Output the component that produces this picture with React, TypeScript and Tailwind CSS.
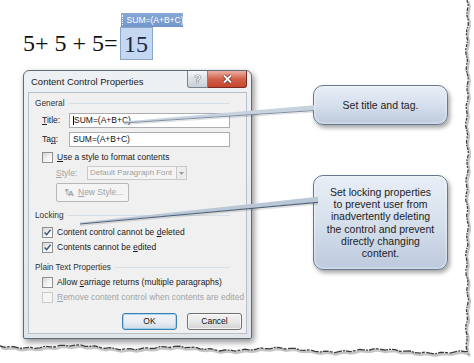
import React from 'react';

// small helpers for the Win7 style dialog
const sans = "font-['Liberation_Sans',Arial,sans-serif]";

function Check({ checked, disabled }: { checked?: boolean; disabled?: boolean }) {
  return (
    <span
      className={`relative w-[11px] h-[11px] shrink-0 border ${
        disabled
          ? 'border-[#cacaca] bg-[#f5f5f5]'
          : 'border-[#8e8f8f] bg-gradient-to-br from-[#d6d6d6] via-[#f0f0f0] to-white'
      }`}
    >
      {checked && (
        <svg className="absolute left-0 top-0" width="9" height="9" viewBox="0 0 9 9">
          <path d="M1.6 4.4 L3.7 6.7 L7.6 1.6" fill="none" stroke="#3e5474" strokeWidth="1.5" />
        </svg>
      )}
    </span>
  );
}

function CheckRow({
  children,
  checked,
  disabled,
  className,
}: {
  children: React.ReactNode;
  checked?: boolean;
  disabled?: boolean;
  className: string;
}) {
  return (
    <div className={`flex items-center gap-[4px] pl-[7px] h-[11px] ${className}`}>
      <Check checked={checked} disabled={disabled} />
      <span className={`text-[8.5px] leading-none whitespace-nowrap ${disabled ? 'text-[#a3a3a3]' : 'text-[#1b1b1b]'}`}>
        {children}
      </span>
    </div>
  );
}

function GroupHead({ children, className }: { children: React.ReactNode; className: string }) {
  return (
    <div className={`flex items-center h-[12px] gap-[4px] ${className}`}>
      <span className="text-[8.3px] leading-none text-[#303030] whitespace-nowrap">{children}</span>
      <span className="flex-1 h-px bg-[#d5dfe5]" />
    </div>
  );
}

function Callout({ children, className }: { children: React.ReactNode; className: string }) {
  return (
    <div
      className={`w-[135px] flex items-center justify-center rounded-[10px] border-[1.5px] border-[#65788f] bg-gradient-to-b from-[#e8eef6] via-[#d6e0ed] to-[#bccadd] shadow-[inset_0_0_3px_rgba(255,255,255,0.95),2px_3px_4px_rgba(0,0,0,0.35)] text-center text-[10.5px] leading-[12.3px] text-[#222] ${sans} ${className}`}
    >
      {children}
    </div>
  );
}

const rightEdge = Array.from({ length: 72 }, (_, i) => {
  const y = i * 5;
  const x = 467 + Math.sin(i * 1.7) * 0.9 + Math.sin(i * 0.45) * 0.7;
  return `${x.toFixed(1)},${y}`;
}).join(' ');

const bottomEdge = Array.from({ length: 95 }, (_, i) => {
  const x = Math.min(i * 5, 468);
  const y = 346 + (x / 467) * 6 + Math.sin(i * 0.31) * 1.6 + Math.sin(i * 1.9) * 0.8;
  return `${x},${y.toFixed(1)}`;
}).join(' ');

export default function App() {
  return (
    <div className="relative w-[474px] h-[363px] bg-white overflow-hidden">
      <div className="flex items-start pl-[23px] pt-[13px]">
        {/* left: equation + dialog */}
        <div className="flex flex-col w-[229px]">
          <div className="flex items-end">
            <span className="font-['Liberation_Serif','Times_New_Roman',serif] text-[24px] leading-[33px] text-[#111] whitespace-pre">
              5+ 5 + 5=
            </span>
            <div className="flex flex-col ml-[2px]">
              <div className={`flex items-center h-[14px] w-[62px] ml-[1px] bg-gradient-to-b from-[#87a8d6] to-[#7196cb] rounded-t-[1px] ${sans}`}>
                <span className="ml-[1px] w-[1px] h-[10px] border-l border-dotted border-white" />
                <span className="ml-[4px] text-[8.5px] leading-none text-white whitespace-nowrap">SUM=(A+B+C)</span>
              </div>
              <div className="w-[33px] h-[33px] border border-[#8ea6c6] bg-[#c4d8f1] flex items-center justify-center">
                <span className="font-['Liberation_Serif','Times_New_Roman',serif] text-[24px] leading-none text-[#1b2a44]">15</span>
              </div>
            </div>
          </div>

          {/* dialog */}
          <div className={`mt-[10px] w-[229px] h-[269px] flex flex-col border border-[#5f6b78] rounded-t-[6px] rounded-b-[2px] bg-gradient-to-b from-[#eef1f4] to-[#e1e6eb] shadow-[2px_3px_6px_rgba(0,0,0,0.45)] ${sans}`}>
            <div className="h-[21px] flex items-start">
              <span className="mt-[5px] ml-[7px] text-[9.5px] leading-[11px] text-[#1a1a1a] whitespace-nowrap">
                Content Control Properties
              </span>
              <div className="flex-1" />
              <div className="flex mr-[4px]">
                <div className="w-[21px] h-[17px] flex items-center justify-center rounded-bl-[3px] border border-t-0 border-[#76828f] bg-gradient-to-b from-[#f6f7f9] via-[#dde2e7] to-[#c9d0d8]">
                  <span className="text-[11px] leading-none font-bold text-[#eef0f2] [text-shadow:0_0_1px_#5a6470,0_0_1px_#5a6470]">?</span>
                </div>
                <div className="w-[39px] h-[17px] flex items-center justify-center rounded-br-[3px] border border-t-0 border-l-0 border-[#7a2c20] bg-gradient-to-b from-[#eab0a2] via-[#d2604a] to-[#c6452d]">
                  <svg width="11" height="10" viewBox="0 0 11 10">
                    <path d="M2 1.5 L9 8.5 M9 1.5 L2 8.5" stroke="#6b2418" strokeWidth="3.2" />
                    <path d="M2 1.5 L9 8.5 M9 1.5 L2 8.5" stroke="#ffffff" strokeWidth="1.9" />
                  </svg>
                </div>
              </div>
            </div>

            <div className="mx-[4px] h-[242px] border border-[#b7c0c9] bg-[#f0f0f0] flex flex-col pl-[6px] pr-[4px]">
              <div className="flex flex-col pr-[12px]">
                <GroupHead className="mt-[4px]">General</GroupHead>
                <div className="mt-[4px] h-[15px] flex items-center pl-[7px]">
                  <span className="w-[27px] text-[8.5px] leading-none text-[#1b1b1b]">
                    <u>T</u>itle:
                  </span>
                  <div className="flex-1 h-full flex items-center border border-[#abadb3] bg-white">
                    <span className="ml-[3px] w-px h-[9px] bg-black" />
                    <span className="text-[8.5px] leading-none text-[#111]">SUM=(A+B+C)</span>
                  </div>
                </div>
                <div className="mt-[4px] h-[15px] flex items-center pl-[7px]">
                  <span className="w-[27px] text-[8.5px] leading-none text-[#1b1b1b]">
                    Ta<u>g</u>:
                  </span>
                  <div className="flex-1 h-full flex items-center border border-[#abadb3] bg-white">
                    <span className="ml-[3px] text-[8.5px] leading-none text-[#111]">SUM=(A+B+C)</span>
                  </div>
                </div>
                <CheckRow className="mt-[5px]">
                  <u>U</u>se a style to format contents
                </CheckRow>
                <div className="mt-[3px] h-[14px] flex items-center pl-[21px]">
                  <span className="w-[31px] text-[8.5px] leading-none text-[#a3a3a3]">
                    <u>S</u>tyle:
                  </span>
                  <div className="w-[100px] h-full flex border border-[#c9c9c9] bg-[#f4f4f4]">
                    <span className="flex-1 flex items-center pl-[2px] text-[7.9px] leading-none text-[#a0a0a0] whitespace-nowrap">
                      Default Paragraph Font
                    </span>
                    <span className="w-[10px] flex items-center justify-center border-l border-[#c9c9c9] bg-[#ececec]">
                      <svg width="5" height="3" viewBox="0 0 5 3">
                        <path d="M0 0 L5 0 L2.5 3 Z" fill="#9a9a9a" />
                      </svg>
                    </span>
                  </div>
                </div>
                <div className="mt-[3px] pl-[21px] flex">
                  <div className="w-[73px] h-[19px] flex items-center gap-[3px] pl-[8px] rounded-[2px] border border-[#b3b8bc] bg-[#f4f4f4]">
                    <span className="relative w-[10px] h-[10px] text-[#9d9d9d] leading-none">
                      <span className="absolute left-0 top-0 text-[7px] leading-none font-bold">¶</span>
                      <span className="absolute left-[3px] top-[2px] text-[8px] leading-none font-bold">A</span>
                    </span>
                    <span className="text-[8.5px] leading-none text-[#a3a3a3] whitespace-nowrap">
                      <u>N</u>ew Style...
                    </span>
                  </div>
                </div>
                <GroupHead className="mt-[7px]">Locking</GroupHead>
                <CheckRow checked className="mt-[6px]">
                  Content control cannot be <u>d</u>eleted
                </CheckRow>
                <CheckRow checked className="mt-[4px]">
                  Contents cannot be <u>e</u>dited
                </CheckRow>
                <GroupHead className="mt-[8px]">Plain Text Properties</GroupHead>
                <CheckRow className="mt-[4px]">
                  Allow <u>c</u>arriage returns (multiple paragraphs)
                </CheckRow>
                <CheckRow disabled className="mt-[4px]">
                  <u>R</u>emove content control when contents are edited
                </CheckRow>
              </div>
              <div className="mt-[10px] flex justify-end gap-[10px]">
                <div className="w-[55px] h-[17px] flex items-center justify-center rounded-[3px] border border-[#3c7fb1] bg-gradient-to-b from-[#f2f2f2] via-[#e9eef3] to-[#cfdbe6] shadow-[inset_0_0_0_1px_rgba(120,200,240,0.6)]">
                  <span className="text-[8.5px] leading-none text-[#111]">OK</span>
                </div>
                <div className="w-[55px] h-[17px] flex items-center justify-center rounded-[3px] border border-[#707070] bg-gradient-to-b from-[#f3f3f3] via-[#e8e8e8] to-[#d2d2d2] shadow-[inset_0_0_0_1px_rgba(255,255,255,0.7)]">
                  <span className="text-[8.5px] leading-none text-[#111]">Cancel</span>
                </div>
              </div>
            </div>
          </div>
        </div>

        {/* right: callouts */}
        <div className="flex flex-col ml-[61px] mt-[72px]">
          <Callout className="h-[40px]">Set title and tag.</Callout>
          <Callout className="h-[95px] mt-[50px]">
            Set locking properties
            <br />
            to prevent user from
            <br />
            inadvertently deleting
            <br />
            the control and prevent
            <br />
            directly changing
            <br />
            content.
          </Callout>
        </div>
      </div>

      {/* callout leader lines */}
      <svg className="absolute left-0 top-0 pointer-events-none" width="474" height="363">
        <polygon points="124,121.6 314,105.2 314,110.2 124,122.8" fill="#c7d2df" />
        <line x1="124" y1="123" x2="314" y2="110.6" stroke="#6f8298" strokeWidth="0.9" />
        <line x1="124" y1="124.3" x2="314" y2="112" stroke="rgba(0,0,0,0.12)" strokeWidth="1.2" />
        <polygon points="80,222.4 318,196.8 318,202 80,223.8" fill="#b9c7d7" />
        <line x1="80" y1="224" x2="318" y2="202.4" stroke="#4f627a" strokeWidth="1.1" />
        <line x1="80" y1="225.4" x2="318" y2="204" stroke="rgba(0,0,0,0.12)" strokeWidth="1.3" />
      </svg>

      {/* torn paper edge */}
      <svg className="absolute left-0 top-0 pointer-events-none" width="474" height="363">
        <polyline points={rightEdge} fill="none" stroke="#c4c4c4" strokeWidth="2.2" transform="translate(1.5,1.5)" />
        <polyline points={rightEdge} fill="none" stroke="#3f3f3f" strokeWidth="1.3" strokeDasharray="3 1 2 1.5 4 1 1.5 1" />
        <polyline points={bottomEdge} fill="none" stroke="#c4c4c4" strokeWidth="2.4" transform="translate(1,1.8)" />
        <polyline points={bottomEdge} fill="none" stroke="#3a3a3a" strokeWidth="1.3" strokeDasharray="6 1 3 1.5 8 1 2 1" />
      </svg>
    </div>
  );
}
